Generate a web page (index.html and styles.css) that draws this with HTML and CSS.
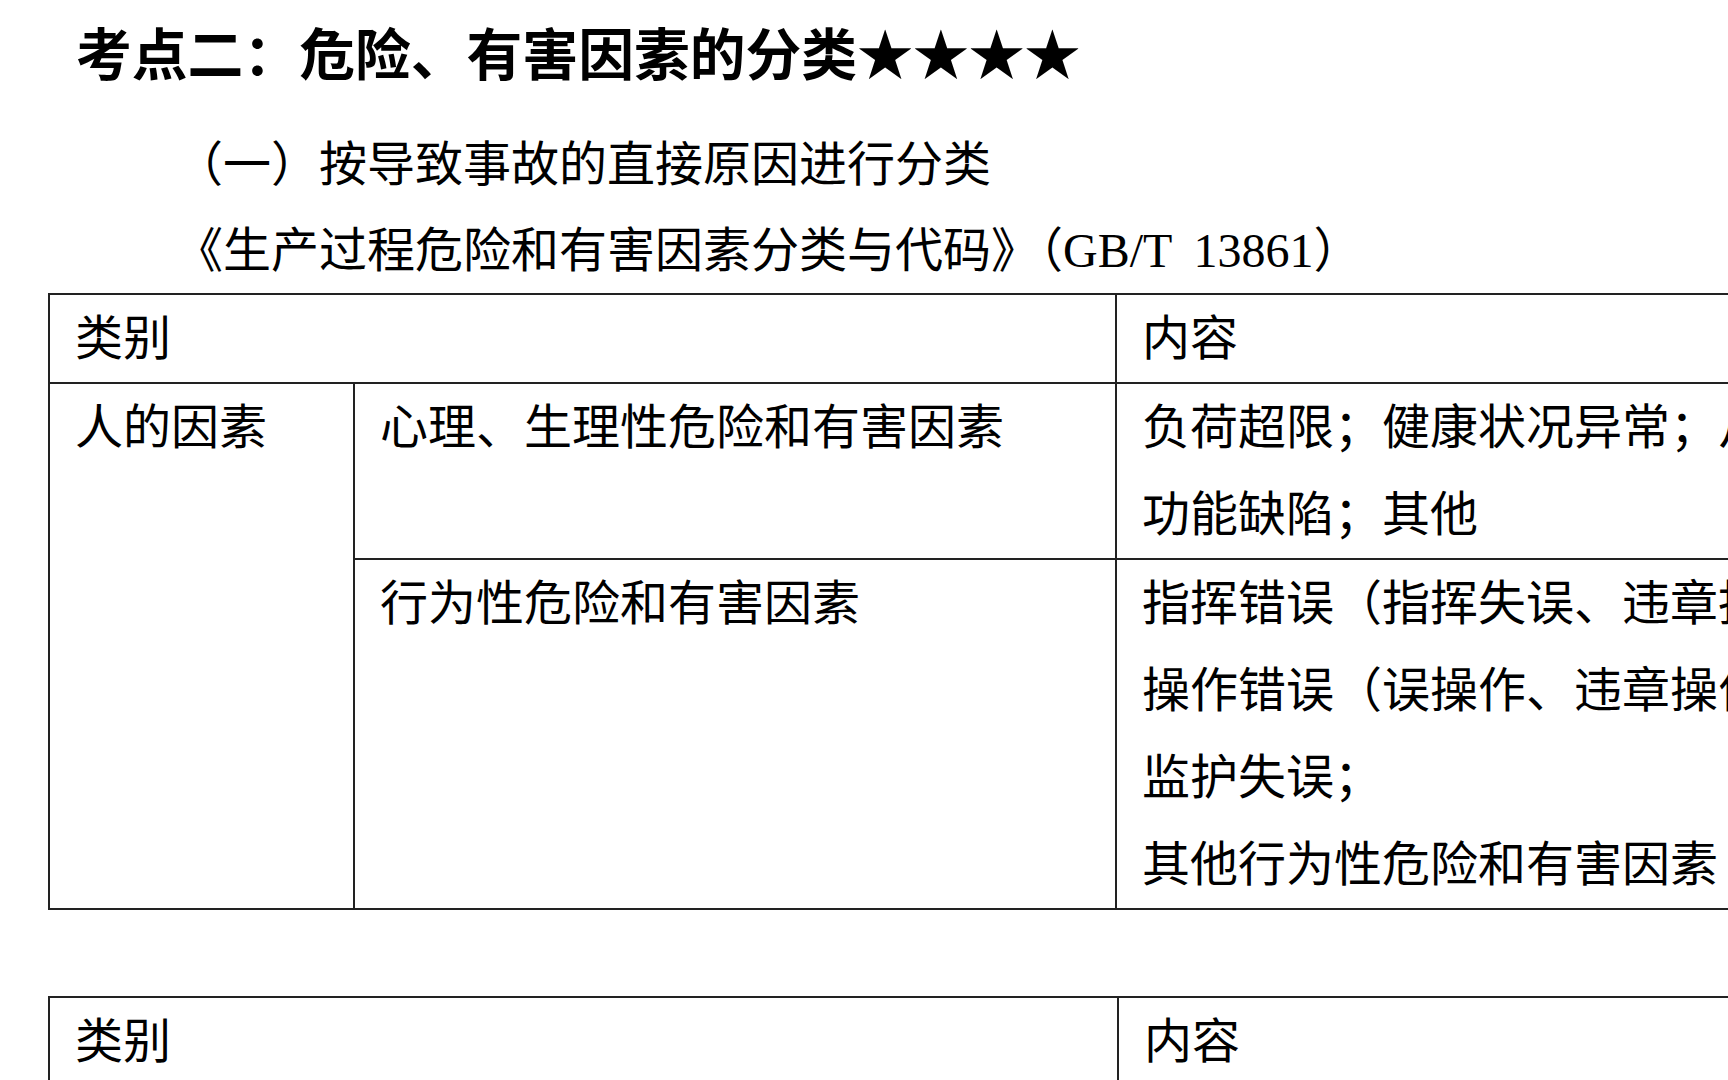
FILE: index.html
```html
<!DOCTYPE html>
<html lang="zh-CN">
<head>
<meta charset="utf-8">
<title>考点二：危险、有害因素的分类</title>
<link rel="stylesheet" href="styles.css">
</head>
<body>
<div class="page">
  <h1 class="title">考点二：危险、有害因素的分类★★★★</h1>
  <p class="para para-first">（一）按导致事故的直接原因进行分类</p>
  <p class="para">《生产过程危险和有害因素分类与代码》（<span class="latin">GB/T 13861</span>）</p>

  <table class="grid">
    <colgroup><col class="c1"><col class="c2"><col class="c3"></colgroup>
    <tr><td colspan="2"><div class="cell">类别</div></td><td><div class="cell">内容</div></td></tr>
    <tr>
      <td rowspan="2"><div class="cell">人的因素</div></td>
      <td><div class="cell">心理、生理性危险和有害因素</div></td>
      <td><div class="cell">负荷超限；健康状况异常；从事禁忌作业；心理异常；辨识<br>功能缺陷；其他</div></td>
    </tr>
    <tr>
      <td><div class="cell">行为性危险和有害因素</div></td>
      <td><div class="cell">指挥错误（指挥失误、违章指挥、其他指挥错误）；<br>操作错误（误操作、违章操作、其他操作错误）；<br>监护失误；<br>其他行为性危险和有害因素</div></td>
    </tr>
  </table>

  <table class="grid grid-second">
    <colgroup><col class="c1"><col class="c2b"><col class="c3"></colgroup>
    <tr><td colspan="2"><div class="cell">类别</div></td><td><div class="cell">内容</div></td></tr>
    <tr>
      <td><div class="cell">物的因素</div></td>
      <td><div class="cell">物理性危险和有害因素</div></td>
      <td><div class="cell">设备、设施、工具、附件缺陷；防护缺陷；电危害；噪声；振动危害</div></td>
    </tr>
  </table>
</div>
</body>
</html>
```
FILE: styles.css
```css
html, body {
  margin: 0;
  padding: 0;
  background: #ffffff;
  overflow: hidden;
}

body {
  width: 1728px;
  height: 1080px;
  font-family: "Noto Sans CJK SC", "Noto Sans", sans-serif;
  color: #000000;
}

.page {
  padding-left: 48px;
}

.title {
  margin: 0;
  padding-left: 28px;
  font-size: 55.8px;
  font-weight: 700;
  line-height: 102px;
  white-space: nowrap;
}

.para {
  margin: 0;
  padding-left: 127px;
  font-size: 48px;
  line-height: 86px;
  font-weight: 400;
  white-space: nowrap;
}

.para-first {
  margin-top: 15px;
}

.latin {
  font-family: "Liberation Serif", serif;
  font-size: 48px;
  line-height: 1;
  word-spacing: 10px;
}

.grid {
  border-collapse: collapse;
  table-layout: fixed;
  width: 2397px;
  margin-top: 4px;
  font-size: 48px;
  line-height: 87px;
}

.grid td {
  border: 2px solid #222222;
  padding: 0 0 0 25px;
  vertical-align: top;
  white-space: nowrap;
  overflow: hidden;
}

.cell {
  margin: -4px 0 4px;
}

.c1 { width: 305px; }
.c2 { width: 762px; }
.c2b { width: 764px; }
.c3 { width: 1330px; }

.grid-second {
  margin-top: 86px;
}
```
